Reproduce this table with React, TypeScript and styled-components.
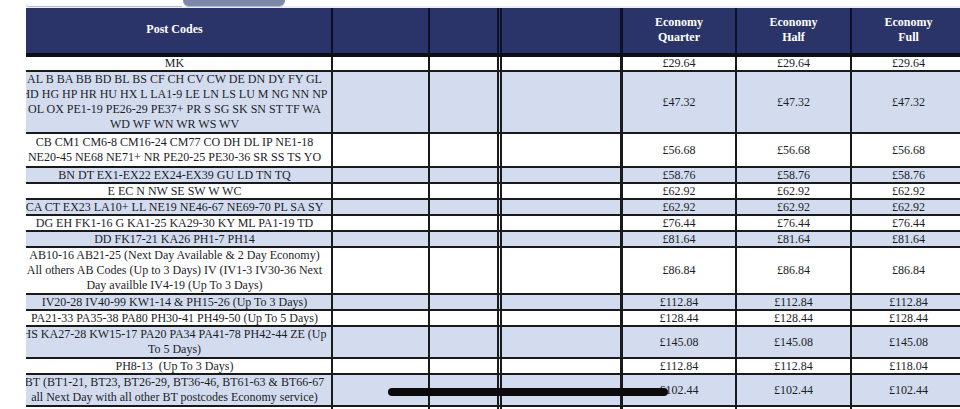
import React from "react";
import styled, { createGlobalStyle } from "styled-components";

type Edge = "thin" | "double" | "thick";

type Band = {
    codes: string[];
    prices: string[];
    height: number;
};

const columns: { width: number; edge: Edge }[] = [
    { width: 315, edge: "thin" },
    { width: 97, edge: "thin" },
    { width: 72, edge: "double" },
    { width: 121, edge: "thick" },
    { width: 114, edge: "thin" },
    { width: 115, edge: "thin" },
    { width: 115, edge: "thin" },
];

const bands: Band[] = [
    { codes: ["MK"], prices: ["29.64", "29.64", "29.64"], height: 15 },
    {
        codes: [
            "AL B BA BB BD BL BS CF CH CV CW DE DN DY FY GL",
            "HD HG HP HR HU HX L LA1-9 LE LN LS LU M NG NN NP",
            "OL OX PE1-19 PE26-29 PE37+ PR S SG SK SN ST TF WA",
            "WD WF WN WR WS WV",
        ],
        prices: ["47.32", "47.32", "47.32"],
        height: 62,
    },
    {
        codes: [
            "CB CM1 CM6-8 CM16-24 CM77 CO DH DL IP NE1-18",
            "NE20-45 NE68 NE71+ NR PE20-25 PE30-36 SR SS TS YO",
        ],
        prices: ["56.68", "56.68", "56.68"],
        height: 34,
    },
    { codes: ["BN DT EX1-EX22 EX24-EX39 GU LD TN TQ"], prices: ["58.76", "58.76", "58.76"], height: 16 },
    { codes: ["E EC N NW SE SW W WC"], prices: ["62.92", "62.92", "62.92"], height: 16 },
    {
        codes: ["CA CT EX23 LA10+ LL NE19 NE46-67 NE69-70 PL SA SY"],
        prices: ["62.92", "62.92", "62.92"],
        height: 16,
    },
    {
        codes: ["DG EH FK1-16 G KA1-25 KA29-30 KY ML PA1-19 TD"],
        prices: ["76.44", "76.44", "76.44"],
        height: 16,
    },
    { codes: ["DD FK17-21 KA26 PH1-7 PH14"], prices: ["81.64", "81.64", "81.64"], height: 16 },
    {
        codes: [
            "AB10-16 AB21-25 (Next Day Available & 2 Day Economy)",
            "All others AB Codes (Up to 3 Days) IV (IV1-3 IV30-36 Next",
            "Day availble IV4-19 (Up To 3 Days)",
        ],
        prices: ["86.84", "86.84", "86.84"],
        height: 47,
    },
    {
        codes: ["IV20-28 IV40-99 KW1-14 & PH15-26 (Up To 3 Days)"],
        prices: ["112.84", "112.84", "112.84"],
        height: 16,
    },
    {
        codes: ["PA21-33 PA35-38 PA80 PH30-41 PH49-50 (Up To 5 Days)"],
        prices: ["128.44", "128.44", "128.44"],
        height: 16,
    },
    {
        codes: ["HS KA27-28 KW15-17 PA20 PA34 PA41-78 PH42-44 ZE (Up", "To 5 Days)"],
        prices: ["145.08", "145.08", "145.08"],
        height: 32,
    },
    { codes: ["PH8-13  (Up To 3 Days)"], prices: ["112.84", "112.84", "118.04"], height: 16 },
    {
        codes: [
            "BT (BT1-21, BT23, BT26-29, BT36-46, BT61-63 & BT66-67",
            "all Next Day with all other BT postcodes Economy service)",
        ],
        prices: ["102.44", "102.44", "102.44"],
        height: 32,
    },
    { codes: [], prices: ["", "", ""], height: 30 },
];

const GlobalStyle = createGlobalStyle`
    html,
    body {
        margin: 0;
        background: #ffffff;
        overflow: hidden;
    }

    body {
        font-family: "Liberation Serif", "Times New Roman", serif;
        color: #1d1d1f;
    }
`;

export default function App() {
    return (
        <>
            <GlobalStyle />
            <Page>
                <TopStrip>
                    <Field />
                    <Tab />
                </TopStrip>
                <Sheet>
                    <Grid>
                        <HeadRow>
                            {columns.map((col, i) => (
                                <HeadCell key={i} $width={col.width} $edge={col.edge}>
                                    {i === 0 && <span>Post Codes</span>}
                                    {i === 4 && (
                                        <>
                                            <span>Economy</span>
                                            <span>Quarter</span>
                                        </>
                                    )}
                                    {i === 5 && (
                                        <>
                                            <span>Economy</span>
                                            <span>Half</span>
                                        </>
                                    )}
                                    {i === 6 && (
                                        <>
                                            <span>Economy</span>
                                            <span>Full</span>
                                        </>
                                    )}
                                </HeadCell>
                            ))}
                        </HeadRow>
                        {bands.map((band, r) => (
                            <Row key={r} $height={band.height} $shaded={r % 2 === 1}>
                                <Cell $width={columns[0].width} $edge={columns[0].edge}>
                                    {band.codes.map((line, j) => (
                                        <Line key={j}>{line}</Line>
                                    ))}
                                </Cell>
                                <Cell $width={columns[1].width} $edge={columns[1].edge} />
                                <Cell $width={columns[2].width} $edge={columns[2].edge} />
                                <Cell $width={columns[3].width} $edge={columns[3].edge} />
                                {band.prices.map((p, k) => (
                                    <Cell key={k} $width={columns[4 + k].width} $edge={columns[4 + k].edge}>
                                        {p && <Line>£{p}</Line>}
                                    </Cell>
                                ))}
                            </Row>
                        ))}
                    </Grid>
                </Sheet>
                <Scribble width="300" height="20" viewBox="0 0 300 20">
                    <line x1="8" y1="10" x2="280" y2="10" stroke="#0b0b0b" strokeWidth="8" strokeLinecap="round" />
                </Scribble>
            </Page>
        </>
    );
}

const edgeStyle = (edge: Edge, dark: string) => {
    if (edge === "double") return `border-right: 5px double ${dark};`;
    if (edge === "thick") return `border-right: 3px solid ${dark};`;
    return `border-right: 2px solid ${dark};`;
};

const Page = styled.div`
    position: relative;
    width: 960px;
    height: 409px;
    overflow: hidden;
    padding-left: 26px;
    box-sizing: border-box;
    background: #ffffff;
`;

const TopStrip = styled.div`
    display: flex;
    height: 8px;
    background: linear-gradient(#ffffff 0 6px, #eceef2 6px);
`;

const Field = styled.div`
    width: 156px;
    height: 6px;
    background: #ffffff;
    border-bottom: 1px solid #b9bcc4;
    border-radius: 0 0 0 4px;
`;

const Tab = styled.div`
    width: 102px;
    height: 6px;
    margin-left: 1px;
    background: #7c88a7;
    border-radius: 0 0 6px 6px;
    box-shadow: 0 1px 1px rgba(0, 0, 0, 0.25);
`;

const Sheet = styled.div`
    overflow: hidden;
`;

const Grid = styled.div`
    display: flex;
    flex-direction: column;
    margin-left: -8px;
    width: max-content;
`;

const HeadRow = styled.div`
    display: flex;
    height: 49px;
    background: #2b3468;
    border-bottom: 4px solid #0c0e18;
    box-sizing: border-box;
`;

const HeadCell = styled.div<{ $width: number; $edge: Edge }>`
    width: ${(p) => p.$width}px;
    flex: none;
    box-sizing: border-box;
    ${(p) => edgeStyle(p.$edge, "#0d1128")}
    display: flex;
    flex-direction: column;
    align-items: center;
    justify-content: center;
    color: #ffffff;
    font-weight: 700;
    font-size: 12px;
    line-height: 15px;
    padding-bottom: 2px;
`;

const Row = styled.div<{ $height: number; $shaded: boolean }>`
    display: flex;
    height: ${(p) => p.$height}px;
    box-sizing: border-box;
    border-bottom: 2px solid #1a1a1c;
    background: ${(p) => (p.$shaded ? "#d3dcef" : "#ffffff")};
`;

const Cell = styled.div<{ $width: number; $edge: Edge }>`
    width: ${(p) => p.$width}px;
    flex: none;
    box-sizing: border-box;
    ${(p) => edgeStyle(p.$edge, "#1a1a1c")}
    display: flex;
    flex-direction: column;
    align-items: center;
    justify-content: center;
    overflow: hidden;
    font-size: 12px;
    line-height: 15px;
`;

const Line = styled.span`
    white-space: pre;
    flex: none;
`;

const Scribble = styled.svg`
    position: absolute;
    left: 384px;
    top: 382px;
`;
